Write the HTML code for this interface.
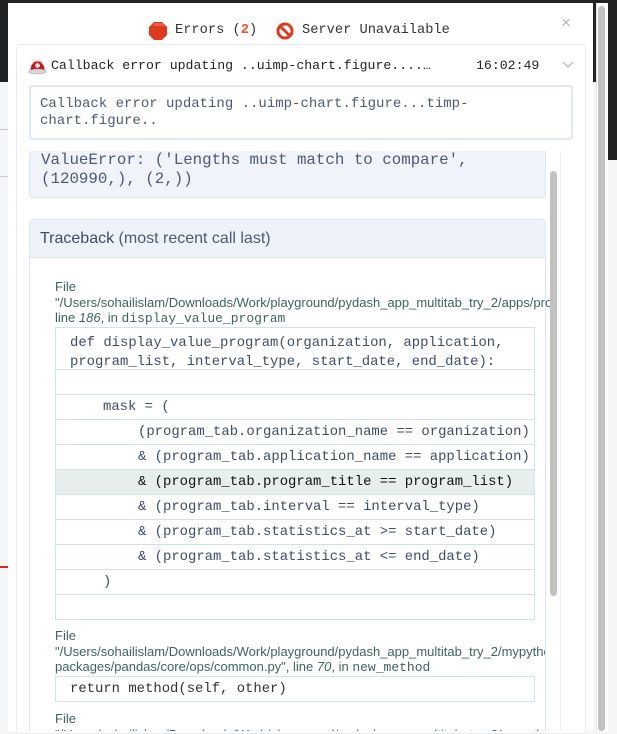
<!DOCTYPE html>
<html><head><style>
*{margin:0;padding:0;box-sizing:border-box}
body{width:617px;height:731px;overflow:hidden;background:#f4f5f7;position:relative;font-family:"Liberation Sans",sans-serif}
.mono{font-family:"Liberation Mono",monospace}
.abs{position:absolute}
</style></head><body>
<div class="abs" style="left:0;top:0;width:617px;height:82px;background:#222325"></div>
<div class="abs" style="left:600px;top:0;width:17px;height:160px;background:#222325"></div>
<div class="abs" style="left:0;top:129px;width:8px;height:1px;background:#ccc"></div>
<div class="abs" style="left:0;top:176px;width:8px;height:1px;background:#ccc"></div>
<div class="abs" style="left:0;top:566px;width:8px;height:2px;background:#d22"></div>
<!-- page scrollbar -->
<div class="abs" style="left:596px;top:3px;width:12px;height:728px;background:#fff;border-left:1px solid #e6e6e6"></div>
<div class="abs" style="left:598px;top:6px;width:7px;height:725px;background:#c1c1c1;border-radius:4px"></div>
<!-- modal -->
<div class="abs" style="left:8px;top:3px;width:585px;height:728px;background:#fff"></div>
<svg class="abs" style="left:148px;top:21px" width="20" height="20" viewBox="0 0 20 20"><polygon points="6,1 14,1 19,6 19,14 14,19 6,19 1,14 1,6" fill="#e03a1e"/><polygon points="6,2 14,2 17,5 5,5" fill="#f47a5c" opacity=".6"/></svg>
<div class="abs mono" style="left:175px;top:23px;font-size:13.7px;color:#333">Errors (<b style="color:#f4511e">2</b>)</div>
<svg class="abs" style="left:276px;top:22px" width="18" height="18" viewBox="0 0 18 18"><circle cx="9" cy="9" r="7" fill="none" stroke="#e03a1e" stroke-width="3"/><line x1="4" y1="4" x2="14" y2="14" stroke="#e03a1e" stroke-width="3"/></svg>
<div class="abs mono" style="left:302px;top:23px;font-size:13.7px;color:#333">Server Unavailable</div>
<div class="abs" style="left:561px;top:13px;font-size:17px;color:#b0b8c4">×</div>
<!-- card -->
<div class="abs" style="left:16px;top:44px;width:570px;height:690px;border:1px solid #e8ecf0;border-radius:4px;background:#fff"></div>
<svg class="abs" style="left:28px;top:57px" width="19" height="18" viewBox="0 0 19 18"><path d="M2.5 13 C2.5 2 16.5 2 16.5 13 Z" fill="#c8161d"/><path d="M5 6 C7 3.5 12 3.5 14 6" stroke="#f07070" stroke-width="1" fill="none"/><ellipse cx="9.5" cy="14.5" rx="8.5" ry="2.5" fill="#d8d8d8" stroke="#999" stroke-width=".6"/><rect x="8.5" y="6" width="2" height="5" fill="#fff"/><rect x="7" y="7.5" width="5" height="2" fill="#fff"/></svg>
<div class="abs mono" style="left:51px;top:58px;font-size:13.2px;color:#222">Callback error updating ..uimp-chart.figure....…</div>
<div class="abs mono" style="left:476px;top:58px;font-size:13.2px;color:#222">16:02:49</div>
<svg class="abs" style="left:562px;top:61px" width="12" height="8" viewBox="0 0 12 8"><path d="M1 1 L6 6 L11 1" fill="none" stroke="#a8b4c4" stroke-width="1.2"/></svg>
<div class="abs mono" style="left:29px;top:85px;width:544px;height:55px;border:2px solid #dfe8f4;border-radius:3px;padding:9px 9px;font-size:14px;line-height:17px;color:#4a5a78">Callback error updating ..uimp-chart.figure...timp-<br>chart.figure..</div>
<!-- scroll area -->
<div class="abs" style="left:24px;top:151px;width:537px;height:580px;overflow:hidden;border-right:1px solid #eceef0">
 <div class="abs mono" style="left:5px;top:-18px;width:517px;height:65px;background:#f0f4fa;border:1px solid #dde6f2;border-radius:3px;padding:0 11px;font-size:15.8px;line-height:19px;color:#4a5a78;padding-top:17px">ValueError: ('Lengths must match to compare',<br>(120990,), (2,))</div>
 <div class="abs" style="left:5px;top:68px;width:517px;height:520px;border:1px solid #dde6f2;border-radius:4px"></div>
 <div class="abs" style="left:6px;top:69px;width:515px;height:38px;background:#eef3fa;border-bottom:1px solid #dde6f2;padding:10px 10px;font-size:16px;color:#4a5a78"><span style="color:#3c4c6a">Traceback</span> (most recent call last)</div>
 <div class="abs" style="left:31px;top:128px;width:490px;font-size:13px;line-height:15.5px;color:#3d6262;white-space:nowrap">File<br>"/Users/sohailislam/Downloads/Work/playground/pydash_app_multitab_try_2/apps/pro<br>line <i>186</i>, in <span class="mono" style="font-size:13px">display_value_program</span></div>
 <div class="abs mono" style="left:31px;top:176px;width:480px;border:1px solid #cfe4e6;font-size:13.9px;color:#3b4c6e">
  <div style="height:42px;padding:6px 14px;line-height:19px;border-bottom:1px solid #cfe4e6">def display_value_program(organization, application,<br>program_list, interval_type, start_date, end_date):</div>
  <div style="height:25px;border-bottom:1px solid #cfe4e6"></div>
  <div style="height:25px;line-height:24px;border-bottom:1px solid #cfe4e6;padding-left:47px;white-space:pre">mask = (</div>
  <div style="height:25px;line-height:24px;border-bottom:1px solid #cfe4e6;padding-left:82px;white-space:pre">(program_tab.organization_name == organization)</div>
  <div style="height:25px;line-height:24px;border-bottom:1px solid #cfe4e6;padding-left:82px;white-space:pre">&amp; (program_tab.application_name == application)</div>
  <div style="height:25px;line-height:24px;border-bottom:1px solid #cfe4e6;padding-left:82px;white-space:pre;background:#e8eeee;color:#111">&amp; (program_tab.program_title == program_list)</div>
  <div style="height:25px;line-height:24px;border-bottom:1px solid #cfe4e6;padding-left:82px;white-space:pre">&amp; (program_tab.interval == interval_type)</div>
  <div style="height:25px;line-height:24px;border-bottom:1px solid #cfe4e6;padding-left:82px;white-space:pre">&amp; (program_tab.statistics_at &gt;= start_date)</div>
  <div style="height:25px;line-height:24px;border-bottom:1px solid #cfe4e6;padding-left:82px;white-space:pre">&amp; (program_tab.statistics_at &lt;= end_date)</div>
  <div style="height:25px;line-height:24px;border-bottom:1px solid #cfe4e6;padding-left:47px;white-space:pre">)</div>
  <div style="height:24px"></div>
 </div>
 <div class="abs" style="left:31px;top:477px;width:490px;font-size:13px;line-height:15.5px;color:#3d6262;white-space:nowrap;overflow:hidden">File<br>"/Users/sohailislam/Downloads/Work/playground/pydash_app_multitab_try_2/mypytho<br>packages/pandas/core/ops/common.py", line <i>70</i>, in <span class="mono">new_method</span></div>
 <div class="abs mono" style="left:31px;top:525px;width:480px;height:26px;border:1px solid #cfe4e6;padding-left:14px;line-height:24px;font-size:13.9px;color:#333">return method(self, other)</div>
 <div class="abs" style="left:31px;top:560px;font-size:13px;line-height:15.5px;color:#3d6262">File<br>"/Users/sohailislam/Downloads/Work/playground/pydash_app_multitab_try_2/mypytho</div>
 <div class="abs" style="left:526px;top:20px;width:7px;height:425px;background:#c1c1c1;border-radius:4px"></div>
</div>
</body></html>
